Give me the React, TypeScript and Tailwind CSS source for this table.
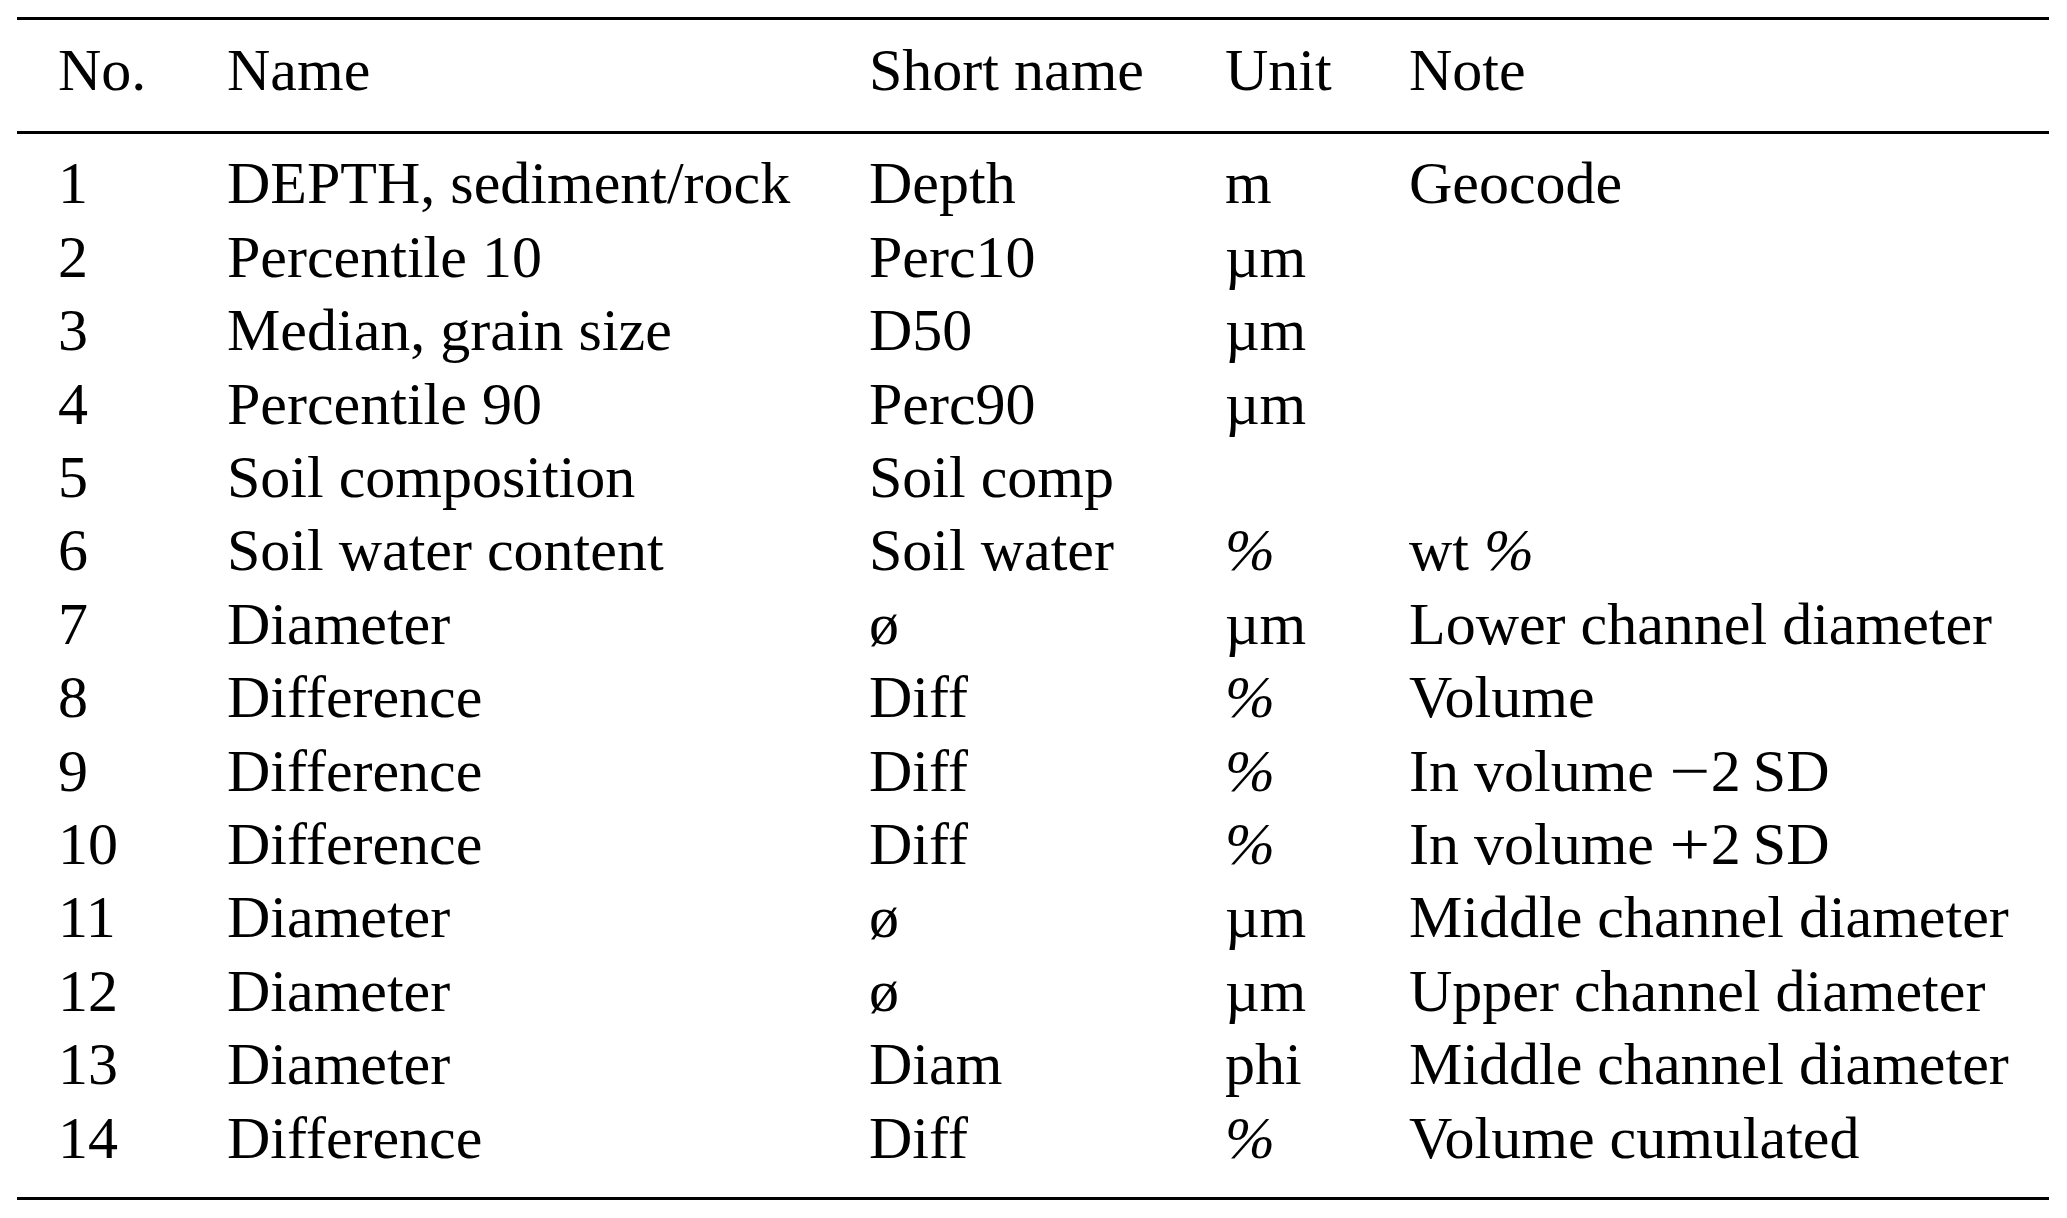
import React from "react";

type Row = [number, string, string, string, React.ReactNode];

// wide math sign as in the typeset table
const Op = ({ s }: { s: string }) => (
  <span className="inline-block origin-center scale-x-[1.2] px-[4px]">{s}</span>
);

const Pct = () => <span className="italic">%</span>;

const rows: Row[] = [
  [1, "DEPTH, sediment/rock", "Depth", "m", "Geocode"],
  [2, "Percentile 10", "Perc10", "µm", ""],
  [3, "Median, grain size", "D50", "µm", ""],
  [4, "Percentile 90", "Perc90", "µm", ""],
  [5, "Soil composition", "Soil comp", "", ""],
  [6, "Soil water content", "Soil water", "%", <>wt <Pct /></>],
  [7, "Diameter", "ø", "µm", "Lower channel diameter"],
  [8, "Difference", "Diff", "%", "Volume"],
  [9, "Difference", "Diff", "%", <>In volume <Op s={"\u2212"} />2{"\u2009"}SD</>],
  [10, "Difference", "Diff", "%", <>In volume <Op s="+" />2{"\u2009"}SD</>],
  [11, "Diameter", "ø", "µm", "Middle channel diameter"],
  [12, "Diameter", "ø", "µm", "Upper channel diameter"],
  [13, "Diameter", "Diam", "phi", "Middle channel diameter"],
  [14, "Difference", "Diff", "%", "Volume cumulated"],
];

const cols = "grid grid-cols-[169px_642px_356px_184px_1fr] pl-[41px]";

function Line() {
  return <div className="h-[3px] w-full bg-black" />;
}

export default function App() {
  return (
    <div className="min-h-screen w-full bg-white text-black">
      <div
        className="ml-[17px] w-[2032px] pt-[17px] text-[60px] leading-[73.4px]"
        style={{ fontFamily: '"Liberation Serif", "Times New Roman", serif' }}
      >
        <Line />
        <div className={`${cols} pt-[14px] pb-[24px]`}>
          <div>No.</div>
          <div>Name</div>
          <div>Short name</div>
          <div>Unit</div>
          <div>Note</div>
        </div>
        <Line />
        <div className="pt-[13px] pb-[22px]">
          {rows.map(([no, name, short, unit, note]) => (
            <div key={no} className={`${cols} whitespace-nowrap`}>
              <div>{no}</div>
              <div>{name}</div>
              <div>{short}</div>
              <div>{unit === "%" ? <Pct /> : unit}</div>
              <div>{note}</div>
            </div>
          ))}
        </div>
        <Line />
      </div>
    </div>
  );
}
